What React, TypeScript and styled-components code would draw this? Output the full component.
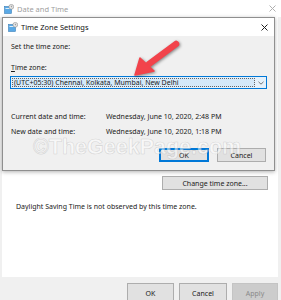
import React from 'react'
import styled, { createGlobalStyle } from 'styled-components'

const GlobalStyle = createGlobalStyle`
  html, body {
    margin: 0;
    padding: 0;
    background: #f0f0f0;
  }
  body {
    font-family: "Noto Sans", "Liberation Sans", sans-serif;
    font-size: 7px;
    color: #1a1a1a;
  }
`

const Window = styled.div`
  position: relative;
  width: 281px;
  height: 300px;
  background: #f0f0f0;
  display: flex;
  flex-direction: column;
  overflow: hidden;
`

const TitleBar = styled.div`
  height: 17px;
  flex-shrink: 0;
  background: #fff;
  display: flex;
  align-items: center;
  padding: 0 5px 0 4px;
  gap: 3px;
  color: #a0a0a0;
  font-size: 7.5px;
`

const TitleText = styled.span`
  flex: 1;
`

const CloseX = styled.svg<{ $faded?: boolean }>`
  width: 7px;
  height: 7px;
  stroke: ${(p) => (p.$faded ? '#b0b0b0' : '#222')};
  stroke-width: 1;
`

const Panel = styled.div`
  flex: 1;
  margin: 0 3px 0 2px;
  background: #fff;
  display: flex;
  flex-direction: column;
  align-items: flex-start;
  padding: 159px 10px 0 14px;
  gap: 12px;
`

const Button = styled.button<{ $w: number; $focus?: boolean; $disabled?: boolean }>`
  width: ${(p) => p.$w}px;
  height: 14px;
  padding: 0;
  font-family: inherit;
  font-size: 7px;
  color: ${(p) => (p.$disabled ? '#8a8a8a' : '#1a1a1a')};
  background: ${(p) => (p.$disabled ? '#cccccc' : '#e1e1e1')};
  border: 1px solid ${(p) => (p.$focus ? '#0078d7' : p.$disabled ? '#c4c4c4' : '#adadad')};
  box-shadow: ${(p) => (p.$focus ? 'inset 0 0 0 1px #0078d7' : 'none')};
`

const ChangeButton = styled(Button)`
  align-self: flex-end;
  height: 14px;
`

const DstText = styled.div`
  line-height: 10px;
`

const Footer = styled.div`
  height: 23px;
  flex-shrink: 0;
  display: flex;
  justify-content: flex-end;
  align-items: flex-start;
  gap: 5px;
  padding: 6px 3px 0 0;
  box-sizing: border-box;
`

const FooterButton = styled(Button)`
  height: 20px;
`

const Dialog = styled.div`
  position: absolute;
  left: 2px;
  top: 17px;
  width: 273px;
  height: 154px;
  box-sizing: border-box;
  border: 1px solid #8f8f8f;
  box-shadow: 0 1px 4px rgba(0, 0, 0, 0.3);
  background: #f0f0f0;
  display: flex;
  flex-direction: column;
`

const DialogTitle = styled.div`
  height: 18px;
  flex-shrink: 0;
  background: #fff;
  display: flex;
  align-items: center;
  gap: 3px;
  padding: 0 6px 0 5px;
  font-size: 7.5px;
  color: #111;
`

const DialogBody = styled.div`
  flex: 1;
  display: flex;
  flex-direction: column;
  padding: 6px 7px 0 7px;
`

const Label = styled.div<{ $gap?: number }>`
  line-height: 10px;
  padding-left: 1px;
  margin-top: ${(p) => p.$gap ?? 0}px;
`

const Combo = styled.div`
  margin-top: 3px;
  height: 13px;
  box-sizing: border-box;
  border: 1px solid #0078d7;
  background: #e5f1fb;
  display: flex;
  align-items: stretch;
`

const ComboText = styled.div`
  flex: 1;
  margin: 1px;
  border: 1px dotted #666;
  background: #d5e9f9;
  display: flex;
  align-items: center;
  padding-left: 1px;
  font-size: 7px;
`

const ComboArrow = styled.div`
  width: 10px;
  display: flex;
  align-items: center;
  justify-content: center;
`

const InfoGrid = styled.div`
  margin-top: 23px;
  padding-left: 1px;
  display: grid;
  grid-template-columns: 95px auto;
  row-gap: 5px;
  line-height: 10px;
`

const DialogButtons = styled.div`
  margin-top: 11px;
  display: flex;
  justify-content: flex-end;
  gap: 8px;
  padding-right: 1px;
`

const Watermark = styled.div`
  position: absolute;
  left: 33px;
  top: 135px;
  font-family: "Liberation Sans", Arial, sans-serif;
  font-weight: bold;
  font-size: 21.5px;
  color: rgba(255, 255, 255, 0.55);
  -webkit-text-stroke: 0.6px rgba(150, 150, 150, 0.35);
  pointer-events: none;
  white-space: nowrap;
`

const Arrow = styled.svg`
  position: absolute;
  left: 0;
  top: 0;
  width: 281px;
  height: 300px;
  pointer-events: none;
  filter: drop-shadow(1px 1px 1.5px rgba(0, 0, 0, 0.45));
`

const U = styled.span`
  text-decoration: underline;
`

const AppIcon = () => (
  <svg width="10" height="10" viewBox="0 0 10 10">
    <rect x="0.5" y="2.5" width="7" height="7" fill="#5aa9e6" stroke="#3b7fb8" strokeWidth="0.6" />
    <rect x="1.5" y="4" width="5" height="1" fill="#dbeefb" />
    <circle cx="7.3" cy="2.8" r="2.4" fill="#e9e9e9" stroke="#8a8a8a" strokeWidth="0.6" />
    <path d="M7.3 1.7 V2.9 H8.2" stroke="#555" strokeWidth="0.5" fill="none" />
  </svg>
)

const XIcon = ({ faded }: { faded?: boolean }) => (
  <CloseX viewBox="0 0 7 7" $faded={faded}>
    <path d="M0.5 0.5 L6.5 6.5 M6.5 0.5 L0.5 6.5" />
  </CloseX>
)

export default function App() {
  return (
    <>
      <GlobalStyle />
      <Window>
        <TitleBar>
          <AppIcon />
          <TitleText>Date and Time</TitleText>
          <XIcon faded />
        </TitleBar>
        <Panel>
          <ChangeButton $w={106}>Change time zone...</ChangeButton>
          <DstText>Daylight Saving Time is not observed by this time zone.</DstText>
        </Panel>
        <Footer>
          <FooterButton $w={47}>OK</FooterButton>
          <FooterButton $w={48}>Cancel</FooterButton>
          <FooterButton $w={46} $disabled>Apply</FooterButton>
        </Footer>

        <Dialog>
          <DialogTitle>
            <AppIcon />
            <TitleText>Time Zone Settings</TitleText>
            <XIcon />
          </DialogTitle>
          <DialogBody>
            <Label>Set the time zone:</Label>
            <Label $gap={11}>
              <U>T</U>ime zone:
            </Label>
            <Combo>
              <ComboText>(UTC+05:30) Chennai, Kolkata, Mumbai, New Delhi</ComboText>
              <ComboArrow>
                <svg width="6" height="4" viewBox="0 0 6 4">
                  <path d="M0.5 0.8 L3 3.2 L5.5 0.8" stroke="#555" strokeWidth="0.8" fill="none" />
                </svg>
              </ComboArrow>
            </Combo>
            <InfoGrid>
              <span>Current date and time:</span>
              <span>Wednesday, June 10, 2020, 2:48 PM</span>
              <span>New date and time:</span>
              <span>Wednesday, June 10, 2020, 1:18 PM</span>
            </InfoGrid>
            <DialogButtons>
              <Button $w={50} $focus>OK</Button>
              <Button $w={49}>Cancel</Button>
            </DialogButtons>
          </DialogBody>
        </Dialog>

        <Watermark>©TheGeekPage.com</Watermark>

        <Arrow viewBox="0 0 281 300">
          <line x1="176" y1="44" x2="149" y2="64" stroke="#f2434b" strokeWidth="6.5" strokeLinecap="round" />
          <polygon points="135,75 140,58 154,71" fill="#f2434b" stroke="#f2434b" strokeWidth="1.5" strokeLinejoin="round" />
        </Arrow>
      </Window>
    </>
  )
}
